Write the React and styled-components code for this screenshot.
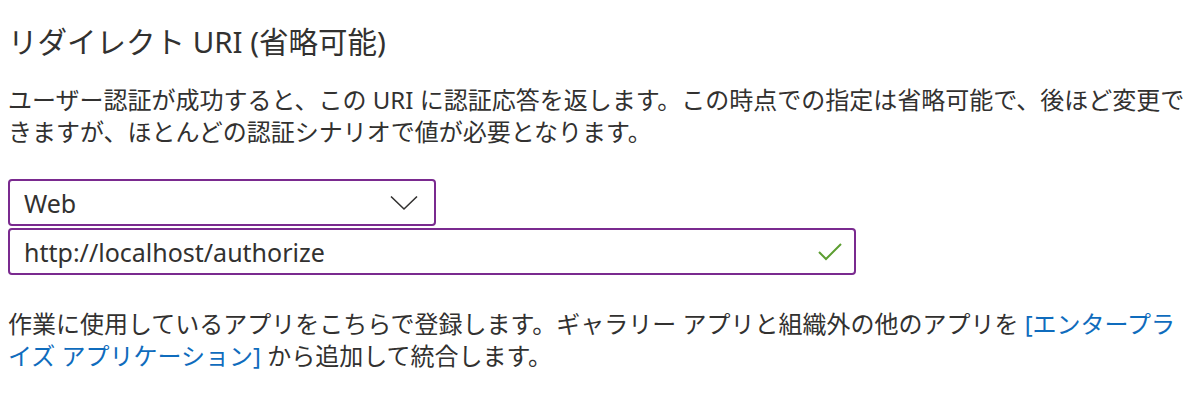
import styled, { createGlobalStyle } from "styled-components";

const GlobalStyle = createGlobalStyle`
  body {
    margin: 0;
    background: #ffffff;
    font-family: "Noto Sans", "Noto Sans CJK JP", sans-serif;
    color: #323130;
  }
`;

const Section = styled.section`
  width: 1188px;
  padding: 22px 0 0 8px;
`;

const Title = styled.h2`
  margin: 0;
  font-size: 29.5px;
  font-weight: 400;
  line-height: 40px;
`;

const Text = styled.p`
  margin: ${(p) => p.$top || 0}px 0 0;
  font-size: 24px;
  line-height: 32px;
`;

const Link = styled.a`
  color: #0f6cbd;
  text-decoration: none;
  cursor: pointer;
`;

const Fields = styled.div`
  display: flex;
  flex-direction: column;
  gap: 2px;
  margin-top: 31px;
`;

const Field = styled.div`
  box-sizing: border-box;
  width: ${(p) => p.$width}px;
  height: 47px;
  display: flex;
  align-items: center;
  justify-content: space-between;
  padding: 0 ${(p) => p.$right}px 0 14px;
  border: 2px solid #7a2a8f;
  border-radius: 4px;
  font-size: 25px;
`;

const Chevron = () => (
  <svg width="28" height="16" viewBox="0 0 28 16" fill="none">
    <path d="M1 1.5 L14 14 L27 1.5" stroke="#323130" strokeWidth="1.6" />
  </svg>
);

const Check = () => (
  <svg width="24" height="18" viewBox="0 0 24 18" fill="none">
    <path d="M1 9 L8 16 L23 1" stroke="#5c9e31" strokeWidth="2" />
  </svg>
);

export default function App() {
  return (
    <>
      <GlobalStyle />
      <Section>
        <Title>リダイレクト URI (省略可能)</Title>
        <Text $top={22}>
          ユーザー認証が成功すると、この URI に認証応答を返します。この時点での指定は省略可能で、後ほど変更できますが、ほとんどの認証シナリオで値が必要となります。
        </Text>
        <Fields>
          <Field $width={428} $right={16}>
            <span>Web</span>
            <Chevron />
          </Field>
          <Field $width={848} $right={12}>
            <span>http://localhost/authorize</span>
            <Check />
          </Field>
        </Fields>
        <Text $top={33}>
          作業に使用しているアプリをこちらで登録します。ギャラリー アプリと組織外の他のアプリを{" "}
          <Link>[エンタープライズ アプリケーション]</Link> から追加して統合します。
        </Text>
      </Section>
    </>
  );
}
